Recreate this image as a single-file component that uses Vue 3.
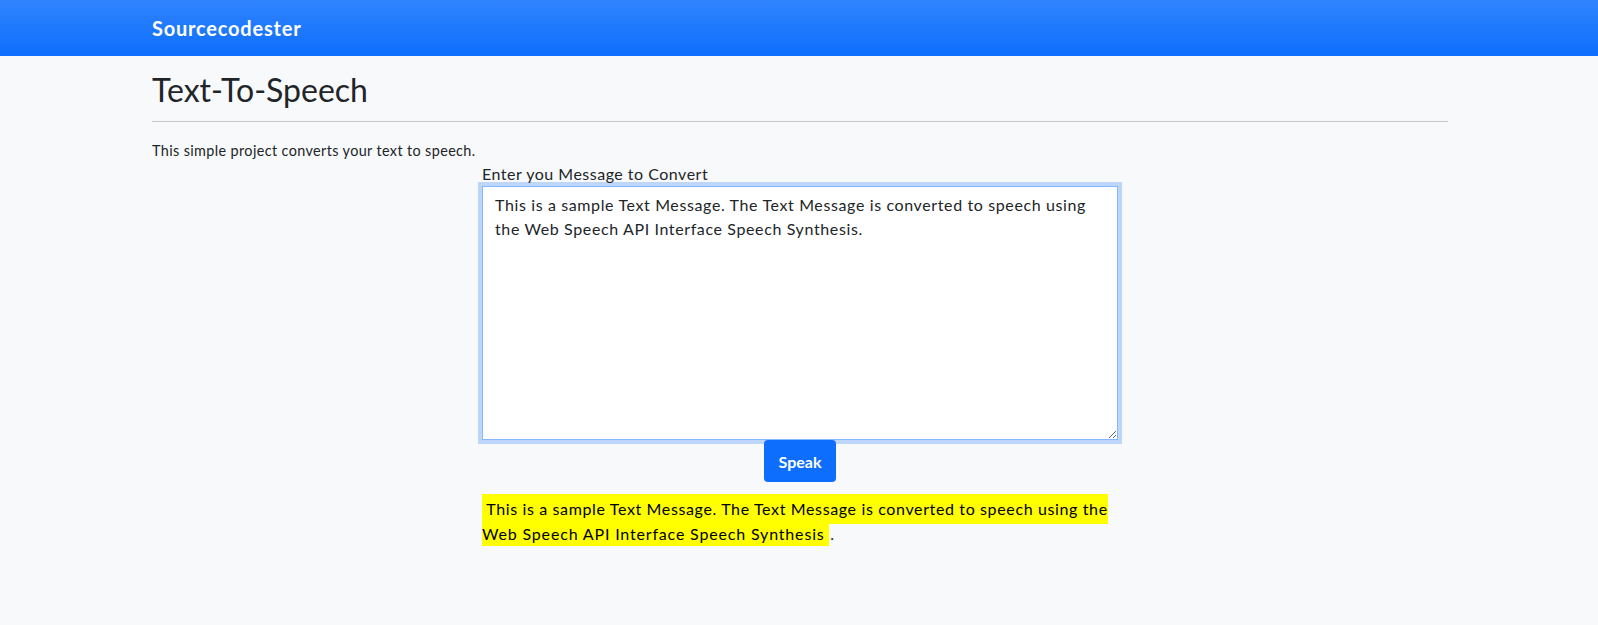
<template>
  <nav class="navbar">
    <div class="container">
      <a class="brand" href="#">Sourcecodester</a>
    </div>
  </nav>
  <main class="container page">
    <h2 class="title">Text-To-Speech</h2>
    <hr class="rule" />
    <p class="lead-text">This simple project converts your text to speech.</p>
    <div class="speech-col">
      <label class="field-label" for="message">Enter you Message to Convert</label>
      <textarea id="message" v-model="message" class="message-input" rows="10"></textarea>
      <div class="actions">
        <button class="speak-btn" type="button">Speak</button>
      </div>
      <p class="output">
        <span class="highlight">&nbsp;{{ lineOne }} <span class="line-two">{{ lineTwo }}</span>&nbsp;</span><span class="dot">.</span>
      </p>
    </div>
  </main>
</template>

<script setup>
import { ref } from 'vue'

const lineOne = 'This is a sample Text Message. The Text Message is converted to speech using the'
const lineTwo = 'Web Speech API Interface Speech Synthesis'
const message = ref('This is a sample Text Message. The Text Message is converted to speech using the Web Speech API Interface Speech Synthesis.')
</script>

<style>
html, body {
  margin: 0;
  background: #f8f9fa;
}
</style>

<style scoped>
.container {
  width: 1296px;
  margin-left: 152px;
}
.navbar {
  height: 56px;
  display: flex;
  align-items: center;
  background: linear-gradient(180deg, #3084fd, #0d6efd);
}
.brand {
  color: #fff;
  font: 700 20px/28px "Lato", sans-serif;
  letter-spacing: 0.8px;
  text-decoration: none;
}
.page {
  font-family: "Lato", sans-serif;
  color: #212529;
}
.title {
  margin: 0;
  padding-top: 15px;
  font-size: 32px;
  font-weight: 400;
  line-height: 38px;
}
.rule {
  margin: 12px 0 17px;
  border: 0;
  border-top: 1px solid #c4c6c9;
}
.lead-text {
  margin: 0;
  font-size: 14.4px;
  line-height: 23px;
  letter-spacing: 0.38px;
}
.speech-col {
  width: 636px;
  margin: 0 auto;
}
.field-label {
  display: block;
  font-size: 16px;
  line-height: 24px;
  letter-spacing: 0.5px;
}
.message-input {
  display: block;
  width: 100%;
  height: 254px;
  box-sizing: border-box;
  padding: 6px 12px;
  border: 1px solid #86b7fe;
  border-radius: 0;
  outline: 0;
  box-shadow: 0 0 0 4px rgba(13, 110, 253, 0.25);
  background: #fff;
  color: #212529;
  font-family: inherit;
  font-size: 16px;
  line-height: 24px;
  letter-spacing: 0.62px;
}
.actions {
  display: flex;
  justify-content: center;
}
.speak-btn {
  width: 72px;
  height: 42px;
  border: 0;
  border-radius: 4px;
  background: #0d6efd;
  color: #fff;
  font-family: inherit;
  font-size: 16px;
  font-weight: 700;
}
.output {
  margin: 14px 0 0;
  font-size: 16px;
  line-height: 25px;
  letter-spacing: 0.63px;
}
.highlight {
  background: #ff0;
  color: #000;
  padding: 5px 0 6px;
}
.line-two {
  letter-spacing: 0.83px;
}
.dot {
  margin-left: 1px;
}
</style>
